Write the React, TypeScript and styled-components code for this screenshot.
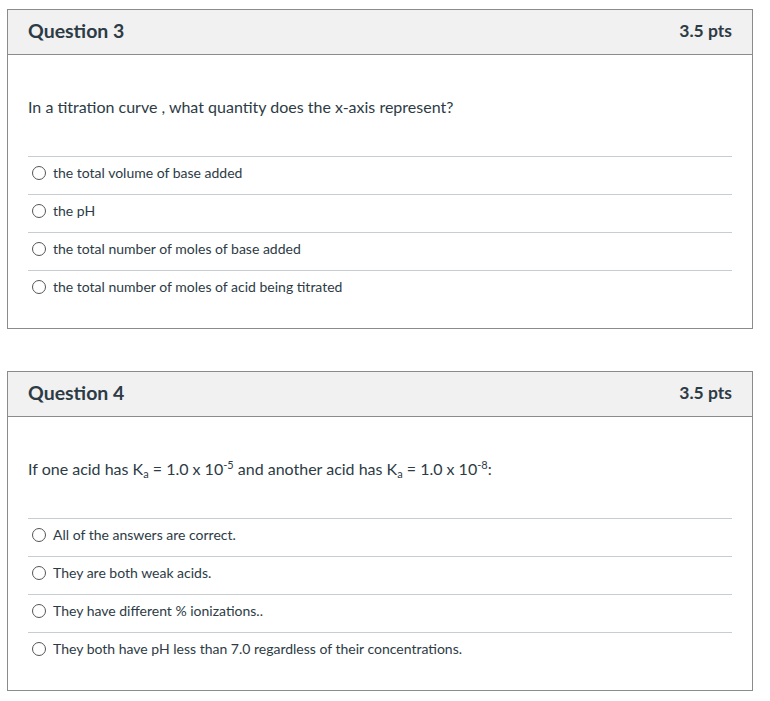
import styled, { createGlobalStyle } from "styled-components";

const GlobalStyle = createGlobalStyle`
  body {
    margin: 0;
    background: #fff;
    font-family: Lato, "Open Sans", sans-serif;
    color: #2d3b45;
  }
`;

const Page = styled.div`
  padding: 9px 17px 10px 7px;
  display: flex;
  flex-direction: column;
  gap: 42px;
`;

const Card = styled.div`
  border: 1px solid #8b8b8b;
  background: #fff;
`;

const Header = styled.div`
  height: 45px;
  background: #f1f1f1;
  border-bottom: 1px solid #8b8b8b;
  display: flex;
  align-items: center;
  justify-content: space-between;
  padding: 0 20px 3px;
  box-sizing: border-box;
`;

const Title = styled.h2`
  margin: 0;
  font-size: 19.5px;
  font-weight: 700;
  color: #2d3b45;
`;

const Points = styled.span`
  font-size: 17.5px;
  font-weight: 700;
`;

const Body = styled.div`
  padding: 41px 20px 20px;
`;

const QuestionText = styled.p`
  margin: 0 0 38px;
  font-size: 16px;
  line-height: 22px;
  sup {
    font-size: 11px;
    line-height: 0;
  }
  sub {
    font-size: 11px;
    line-height: 0;
    vertical-align: -3px;
  }
`;

const AnswerList = styled.div`
  display: flex;
  flex-direction: column;
`;

const Answer = styled.label`
  display: flex;
  align-items: flex-start;
  gap: 7px;
  height: 38px;
  box-sizing: border-box;
  border-top: 1px solid #c7cdd1;
  padding: 6px 0 0 4px;
  font-size: 14px;
  line-height: 19px;
`;

const Radio = styled.span`
  width: 14px;
  height: 14px;
  margin-top: 3px;
  box-sizing: border-box;
  border: 1px solid #555;
  border-radius: 50%;
  flex-shrink: 0;
`;

type Q = {
  title: string;
  points: string;
  text: React.ReactNode;
  answers: string[];
};

const questions: Q[] = [
  {
    title: "Question 3",
    points: "3.5 pts",
    text: "In a titration curve , what quantity does the x-axis represent?",
    answers: [
      "the total volume of base added",
      "the pH",
      "the total number of moles of base added",
      "the total number of moles of acid being titrated",
    ],
  },
  {
    title: "Question 4",
    points: "3.5 pts",
    text: (
      <>
        If one acid has K<sub>a</sub> = 1.0 x 10<sup>-5</sup> and another acid has K
        <sub>a</sub> = 1.0 x 10<sup>-8</sup>:
      </>
    ),
    answers: [
      "All of the answers are correct.",
      "They are both weak acids.",
      "They have different % ionizations..",
      "They both have pH less than 7.0 regardless of their concentrations.",
    ],
  },
];

function QuestionCard({ q }: { q: Q }) {
  return (
    <Card>
      <Header>
        <Title>{q.title}</Title>
        <Points>{q.points}</Points>
      </Header>
      <Body>
        <QuestionText>{q.text}</QuestionText>
        <AnswerList>
          {q.answers.map((a) => (
            <Answer key={a}>
              <Radio />
              {a}
            </Answer>
          ))}
        </AnswerList>
      </Body>
    </Card>
  );
}

export default function App() {
  return (
    <>
      <GlobalStyle />
      <Page>
        {questions.map((q) => (
          <QuestionCard key={q.title} q={q} />
        ))}
      </Page>
    </>
  );
}
